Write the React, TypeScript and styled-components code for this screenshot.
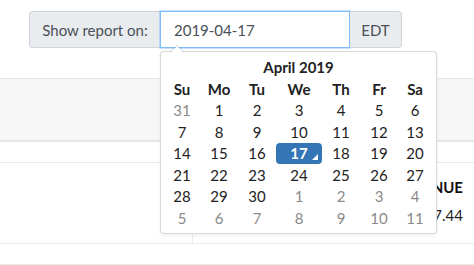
import React from 'react'
import styled, { createGlobalStyle } from 'styled-components'

const GlobalStyle = createGlobalStyle`
  body { margin: 0; background: #fff; font-family: Lato, "Open Sans", sans-serif; color: #212529; }
`

type Day = { n: number; muted?: boolean; active?: boolean }

const weekDays = ['Su', 'Mo', 'Tu', 'We', 'Th', 'Fr', 'Sa']

const buildWeeks = (): Day[][] => {
  const days: Day[] = [{ n: 31, muted: true }]
  for (let i = 1; i <= 30; i++) days.push({ n: i, active: i === 17 })
  for (let i = 1; i <= 11; i++) days.push({ n: i, muted: true })
  const weeks: Day[][] = []
  for (let i = 0; i < days.length; i += 7) weeks.push(days.slice(i, i + 7))
  return weeks
}

const App: React.FC = () => {
  const weeks = buildWeeks()
  return (
    <Page>
      <GlobalStyle />
      <Toolbar>
        <InputGroup>
          <Addon $first>Show report on:</Addon>
          <DateInput defaultValue='2019-04-17' />
          <Addon $last>EDT</Addon>
        </InputGroup>
      </Toolbar>

      <Table>
        <Band />
        <Row $h={20} />
        <Row $h={80}>
          <LeftCol />
          <RightCol>
            <ColHead>REVENUE</ColHead>
            <ColValue>$12,487.44</ColValue>
          </RightCol>
        </Row>
        <Row $h={20} />
      </Table>

      <Picker>
        <Title>April 2019</Title>
        <Grid>
          {weekDays.map(d => <Dow key={d}>{d}</Dow>)}
          {weeks.map((week, w) => week.map((day, i) => (
            <DayCell key={w + '-' + i} $muted={day.muted} $active={day.active}>
              {day.n}
            </DayCell>
          )))}
        </Grid>
      </Picker>
    </Page>
  )
}

const Page = styled.div`
  position: relative;
  width: 474px;
  height: 265px;
  overflow: hidden;
`

const Toolbar = styled.div`
  display: flex;
  padding: 11px 0 0 29px;
`

const InputGroup = styled.div`
  display: flex;
  height: 37px;
`

const Addon = styled.div<{ $first?: boolean; $last?: boolean }>`
  display: flex;
  align-items: center;
  justify-content: center;
  box-sizing: border-box;
  white-space: nowrap;
  background: #e9ecef;
  border: 1px solid #ced4da;
  color: #495057;
  font-size: 15px;
  border-radius: ${p => p.$first ? '4px 0 0 4px' : p.$last ? '0 4px 4px 0' : '0'};
  ${p => p.$first && 'border-right: none; width: 131px;'}
  ${p => p.$last && 'border-left: none; width: 52px;'}
`

const DateInput = styled.input`
  box-sizing: border-box;
  width: 190px;
  height: 37px;
  padding: 0 13px;
  border: 1px solid #80bdff;
  box-shadow: 0 0 0 1px rgba(128, 189, 255, 0.45);
  outline: none;
  font-family: inherit;
  font-size: 15px;
  color: #495057;
  background: #fff;
`

const Table = styled.div`
  margin-top: 30px;
  display: flex;
  flex-direction: column;
`

const Band = styled.div`
  height: 61px;
  background: #f7f7f7;
  border-top: 1px solid #e6e6e6;
  border-bottom: 2px solid #e6e6e6;
`

const Row = styled.div<{ $h: number }>`
  display: flex;
  height: ${p => p.$h}px;
  border-bottom: 1px solid #e9e9e9;
`

const LeftCol = styled.div`
  width: 192px;
  border-right: 1px solid #e9e9e9;
`

const RightCol = styled.div`
  flex: 1;
  display: flex;
  flex-direction: column;
  align-items: flex-end;
  padding: 15px 11px 0 0;
  gap: 10px;
`

const ColHead = styled.div`
  font-size: 15px;
  font-weight: 700;
  color: #111;
`

const ColValue = styled.div`
  font-size: 15px;
  color: #222;
`

const Picker = styled.div`
  position: absolute;
  top: 51px;
  left: 160px;
  box-sizing: border-box;
  width: 277px;
  padding: 4px;
  background: #fff;
  border: 1px solid rgba(0, 0, 0, 0.15);
  border-radius: 4px;
  box-shadow: 0 2px 4px rgba(0, 0, 0, 0.06);

  &::before, &::after {
    content: '';
    position: absolute;
    border-left: 7px solid transparent;
    border-right: 7px solid transparent;
  }
  &::before {
    top: -7px;
    left: 9px;
    border-bottom: 7px solid rgba(0, 0, 0, 0.18);
  }
  &::after {
    top: -6px;
    left: 10px;
    border-left-width: 6px;
    border-right-width: 6px;
    border-bottom: 6px solid #fff;
  }
`

const Title = styled.div`
  height: 22px;
  line-height: 22px;
  text-align: center;
  font-size: 15px;
  font-weight: 700;
  color: #222;
`

const Grid = styled.div`
  display: grid;
  grid-template-columns: 36px 38px 38px 46px 38px 38px 34px;
  grid-auto-rows: 21.5px;
  margin-left: -1px;
`

const Dow = styled.div`
  display: flex;
  align-items: center;
  justify-content: center;
  font-size: 15px;
  font-weight: 700;
  color: #222;
  height: 22px;
`

const DayCell = styled.div<{ $muted?: boolean; $active?: boolean }>`
  position: relative;
  display: flex;
  align-items: center;
  justify-content: center;
  font-size: 15px;
  color: ${p => p.$active ? '#fff' : p.$muted ? '#8a8a8a' : '#222'};
  background: ${p => p.$active ? '#3375b5' : 'transparent'};
  border-radius: 4px;
  ${p => p.$active && `
    font-weight: 700;
    &::after {
      content: '';
      position: absolute;
      right: 4px;
      bottom: 4px;
      border-left: 6px solid transparent;
      border-bottom: 6px solid #fff;
    }
  `}
`

export default App
